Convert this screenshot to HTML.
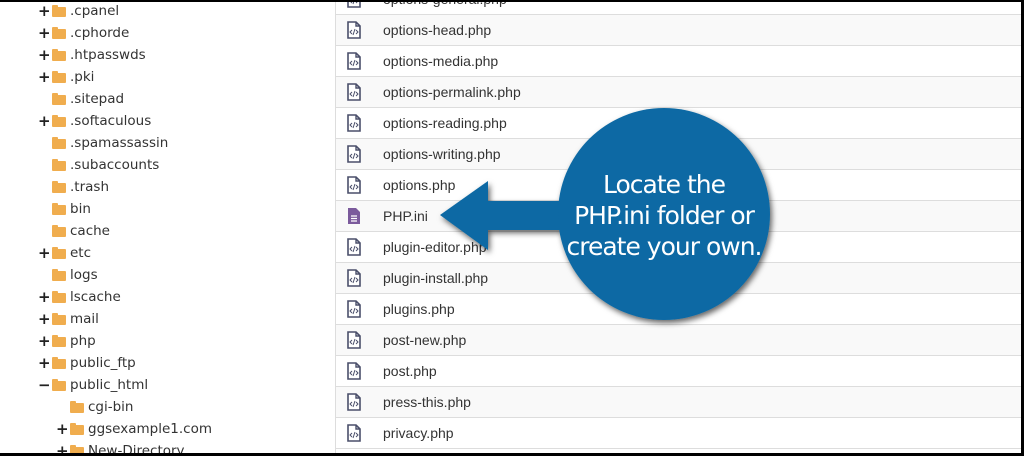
<!DOCTYPE html><html><head><style>
body{margin:0;width:1024px;height:456px;overflow:hidden;background:#000;position:relative;font-family:"Liberation Sans",sans-serif}
#f{position:absolute;left:0;top:2px;width:1021px;height:451px;background:#fff;overflow:hidden}
#l{position:absolute;left:0;top:0;width:335px;height:451px;border-right:1px solid #ddd}
.t{position:absolute;color:#333;height:22px;line-height:22px;font-family:"DejaVu Sans",sans-serif;font-size:13.5px}
.t i{position:absolute;top:7px;width:14px;height:10px;background:#f0ad4e;border-radius:1px}
.t i:before{content:"";position:absolute;left:0;top:-2px;width:6px;height:3px;background:#f0ad4e;border-radius:1px 1px 0 0}
.t b{position:absolute;top:0;font-weight:bold;font-size:15px;color:#222}
.r{position:absolute;left:336px;width:685px;height:30px;border-bottom:1px solid #ddd;font-size:14px;color:#333;line-height:30px}
.r span{position:absolute;left:47px}
.r svg{position:absolute;left:11px;top:6px}
</style></head><body><div id="f">
<div id="l"></div>
</div>
<script>
var L=document.getElementById('l');
var items=[[1,'.cpanel'],[1,'.cphorde'],[1,'.htpasswds'],[1,'.pki'],[0,'.sitepad'],[1,'.softaculous'],[0,'.spamassassin'],[0,'.subaccounts'],[0,'.trash'],[0,'bin'],[0,'cache'],[1,'etc'],[0,'logs'],[1,'lscache'],[1,'mail'],[1,'php'],[1,'public_ftp'],[2,'public_html'],[0,'cgi-bin',1],[1,'ggsexample1.com',1],[1,'New-Directory',1]];
var h='';items.forEach(function(it,k){var y=-2+22*k;var x=it[2]?56:38;
h+='<div class="t" style="top:'+y+'px;left:'+x+'px;width:300px">'+(it[0]==1?'<b>+</b>':it[0]==2?'<b>&minus;</b>':'')+'<i style="left:14px"></i><span style="position:absolute;left:32px">'+it[1]+'</span></div>';});
L.innerHTML=h;
var F=document.getElementById('f');
var files=['options-general.php','options-head.php','options-media.php','options-permalink.php','options-reading.php','options-writing.php','options.php','PHP.ini','plugin-editor.php','plugin-install.php','plugins.php','post-new.php','post.php','press-this.php','privacy.php'];
var ic='<svg width="14" height="18" viewBox="0 0 14 18"><path d="M1 1h8l4 4v12H1z" fill="#fff" stroke="#4a4f6a" stroke-width="1.6"/><path d="M9 1v4h4" fill="none" stroke="#4a4f6a" stroke-width="1.4"/><path d="M5 9l-2 2 2 2M9 9l2 2-2 2M8 8l-2 6" fill="none" stroke="#4a4f6a" stroke-width="1"/></svg>';
var ini='<svg width="14" height="18" viewBox="0 0 14 18"><path d="M1 1h8l4 4v12H1z" fill="#7b5a9c"/><path d="M4 9h6M4 11.5h6M4 14h6" stroke="#fff" stroke-width="1.2"/></svg>';
var s='';files.forEach(function(n,k){var y=-18+31*k;var g=(k%2==1);
s+='<div class="r" style="top:'+y+'px;background:'+(g?'#f9f9f9':'#fff')+'">'+(n=='PHP.ini'?ini:ic)+'<span>'+n+'</span></div>';});
F.insertAdjacentHTML('beforeend',s);
</script>
<div style="position:absolute;left:0;top:0;width:1024px;height:456px;pointer-events:none">
<svg width="1024" height="456" style="position:absolute;left:0;top:0"><defs><filter id="d"><feDropShadow dx="2" dy="3" stdDeviation="3" flood-color="#000" flood-opacity="0.6"/></filter></defs>
<g filter="url(#d)" fill="#0a69a4"><path d="M440 215L488 181V201H580V230H488V250Z"/><circle cx="664" cy="214" r="106"/></g></svg>
<div style="position:absolute;left:553px;top:169px;width:222px;text-align:center;color:#fff;font-size:25px;line-height:31px;font-family:'DejaVu Sans',sans-serif;letter-spacing:-1px">Locate the<br>PHP.ini folder or<br>create your own.</div>
</div>
</body></html>
